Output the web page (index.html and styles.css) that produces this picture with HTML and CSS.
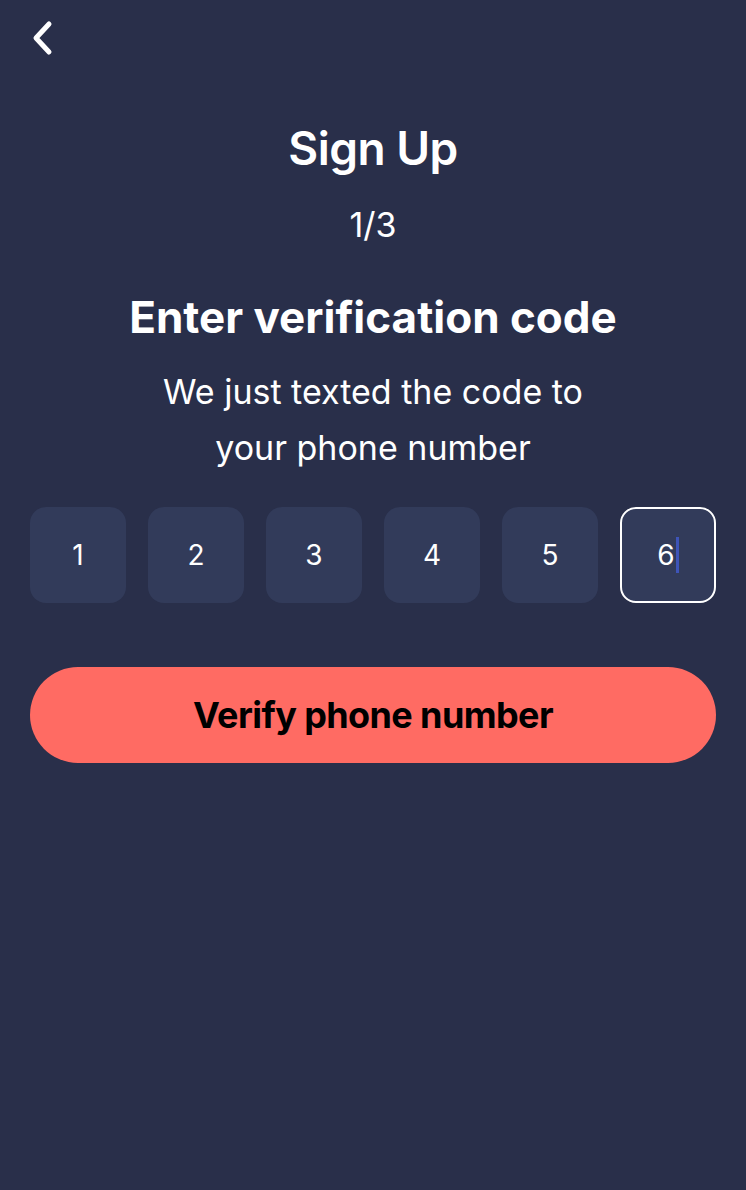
FILE: index.html
```html
<!DOCTYPE html>
<html lang="en">
<head>
<meta charset="utf-8">
<title>Sign Up</title>
<link rel="stylesheet" href="styles.css">
</head>
<body>
<div class="screen">
  <header class="topbar">
    <button class="back" aria-label="Back">
      <svg width="24" height="36" viewBox="0 0 24 36" fill="none">
        <path d="M18 4 L5 18 L18 32" stroke="#ffffff" stroke-width="5" stroke-linecap="round" stroke-linejoin="round"/>
      </svg>
    </button>
  </header>
  <main class="content">
    <h1 class="title">Sign Up</h1>
    <div class="step">1/3</div>
    <h2 class="heading">Enter verification code</h2>
    <p class="desc">We just texted the code to<br>your phone number</p>
    <div class="code">
      <div class="digit">1</div>
      <div class="digit">2</div>
      <div class="digit">3</div>
      <div class="digit">4</div>
      <div class="digit">5</div>
      <div class="digit active">6<span class="caret"></span></div>
    </div>
    <button class="verify">Verify phone number</button>
  </main>
</div>
</body>
</html>
```

FILE: styles.css
```css
html, body {
  margin: 0;
  padding: 0;
  background: #292f4a;
}
body {
  font-family: Inter, "Noto Sans", "Liberation Sans", sans-serif;
  color: #ffffff;
  min-height: 1190px;
}
.screen {
  display: flex;
  flex-direction: column;
}
.topbar {
  height: 76px;
  padding: 20px 0 0 31px;
  box-sizing: border-box;
}
.back {
  background: none;
  border: 0;
  padding: 0;
  width: 24px;
  height: 36px;
  display: block;
  cursor: pointer;
}
.back svg { display: block; }
.content {
  padding: 0 30px;
  display: flex;
  flex-direction: column;
  align-items: center;
  text-align: center;
}
.title {
  margin: 44px 0 0;
  font-size: 46px;
  line-height: 56px;
  font-weight: 600;
  letter-spacing: -0.5px;
}
.step {
  margin-top: 29px;
  font-size: 34px;
  line-height: 40px;
  font-weight: 400;
}
.heading {
  margin: 45px 0 0;
  font-size: 44px;
  line-height: 54px;
  font-weight: 700;
  letter-spacing: 0;
}
.desc {
  margin: 20px 0 0;
  font-size: 34px;
  line-height: 56px;
  font-weight: 400;
}
.code {
  margin-top: 31px;
  display: flex;
  gap: 22px;
  width: 100%;
}
.digit {
  width: 96px;
  height: 96px;
  border-radius: 16px;
  background: #323b5a;
  box-sizing: border-box;
  display: flex;
  align-items: center;
  justify-content: center;
  font-size: 28px;
  font-weight: 400;
  color: #ffffff;
}
.digit.active {
  border: 2px solid #ffffff;
}
.caret {
  display: inline-block;
  width: 3px;
  height: 36px;
  background: #3e54b8;
  margin-left: 1px;
}
.verify {
  margin-top: 64px;
  width: 100%;
  height: 96px;
  border: 0;
  border-radius: 48px;
  background: #ff6b63;
  color: #000000;
  font-family: Inter, "Noto Sans", "Liberation Sans", sans-serif;
  font-size: 36px;
  font-weight: 700;
  letter-spacing: -0.6px;
  cursor: pointer;
}
```
